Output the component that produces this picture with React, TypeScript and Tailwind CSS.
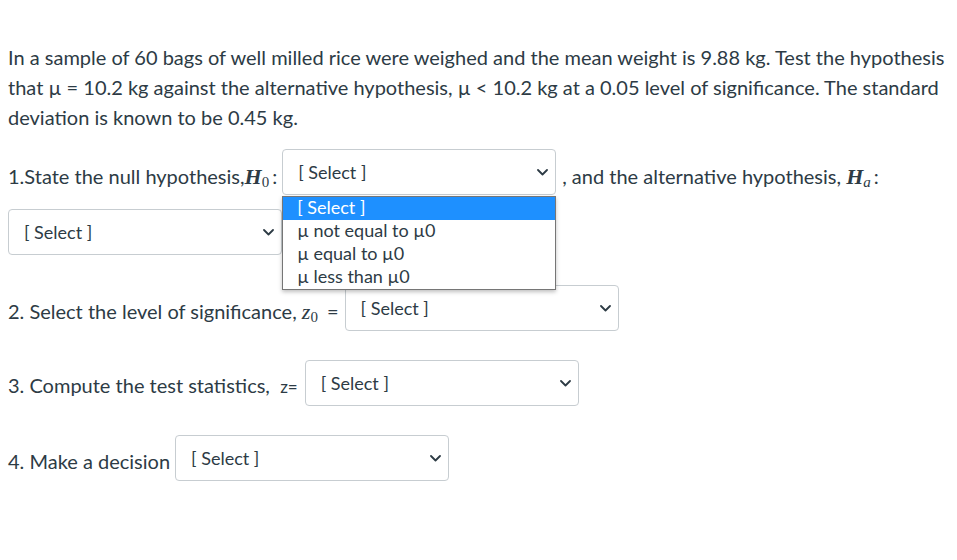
import React from "react";

const font = { fontFamily: "Lato, 'Noto Sans', sans-serif" };

function Chevron() {
  return (
    <svg width="11" height="7" viewBox="0 0 11 7" fill="none" className="shrink-0">
      <path d="M1 1l4.5 4.5L10 1" stroke="#2d3b45" strokeWidth="1.8" strokeLinecap="round" strokeLinejoin="round" />
    </svg>
  );
}

function FakeSelect({ className = "" }: { className?: string }) {
  return (
    <div
      className={`h-[46px] w-[274px] shrink-0 flex items-center justify-between pl-[15px] pr-[7px] border border-[#c7cdd1] rounded-[4px] bg-white text-[18px] text-[#2d3b45] ${className}`}
    >
      <span className="-mt-px">[ Select ]</span>
      <Chevron />
    </div>
  );
}

const options = ["[ Select ]", "\u00b5 not equal to \u00b50", "\u00b5 equal to \u00b50", "\u00b5 less than \u00b50"];

function Math({ base, sub, bold = false }: { base: string; sub: string; bold?: boolean }) {
  return (
    <span className={`text-[22px] ${bold ? "font-bold" : ""}`} style={{ fontFamily: "'Liberation Serif', serif" }}>
      <i>{base}</i>
      <sub className="text-[15px] not-italic font-normal">{sub === "a" ? <i>a</i> : sub}</sub>
    </span>
  );
}

export default function App() {
  return (
    <div className="bg-white w-[957px] h-[560px] pl-2 pt-[43px] text-[#2d3b45] text-[20px] leading-[30px]" style={font}>
      <p className="whitespace-nowrap -mt-px">
        In a sample of 60 bags of well milled rice were weighed and the mean weight is 9.88 kg. Test the hypothesis
        <br />
        that {"\u00b5"} = 10.2 kg against the alternative hypothesis, {"\u00b5"} &lt; 10.2 kg at a 0.05 level of significance. The standard
        <br />
        deviation is known to be 0.45 kg.
      </p>

      {/* row 1 */}
      <div className="mt-[17px] flex items-center">
        <span className="mt-2 whitespace-nowrap">
          1.State the null hypothesis,<Math base="H" sub="0" bold />
          <span className="ml-[3px]">:</span>
        </span>
        <div className="relative ml-[5px]">
          <FakeSelect />
          <div className="absolute left-0 top-[47px] z-10 w-[274px] bg-white border border-[#767676] shadow-[0_2px_4px_rgba(0,0,0,0.25)] text-[18px] leading-[23px]">
            {options.map((o, i) => (
              <div key={o} className={`pl-[14px] ${i === 0 ? "bg-[#1e90ff] text-white" : "text-[#2d3b45]"}`}>
                <span className="relative -top-px">{o}</span>
              </div>
            ))}
          </div>
        </div>
        <span className="ml-[6px] mt-2 whitespace-nowrap">
          , and the alternative hypothesis, <Math base="H" sub="a" bold />
          <span className="ml-[3px]">:</span>
        </span>
      </div>

      {/* row 2 */}
      <div className="mt-[14px] flex">
        <FakeSelect />
      </div>

      {/* row 3 */}
      <div className="mt-[30px] flex items-center">
        <span className="mt-[6px] whitespace-nowrap">
          2. Select the level of significance, <Math base="z" sub="0" /> <span className="ml-1">=</span>
        </span>
        <FakeSelect className="ml-[6px]" />
      </div>

      {/* row 4 */}
      <div className="mt-[29px] flex items-center">
        <span className="mt-[6px] whitespace-nowrap">
          3. Compute the test statistics,&nbsp; <span className="text-[17px]">z=</span>
        </span>
        <FakeSelect className="ml-[7px]" />
      </div>

      {/* row 5 */}
      <div className="mt-[29px] flex items-center">
        <span className="mt-[6px] whitespace-nowrap">4. Make a decision</span>
        <FakeSelect className="ml-[5px]" />
      </div>
    </div>
  );
}
